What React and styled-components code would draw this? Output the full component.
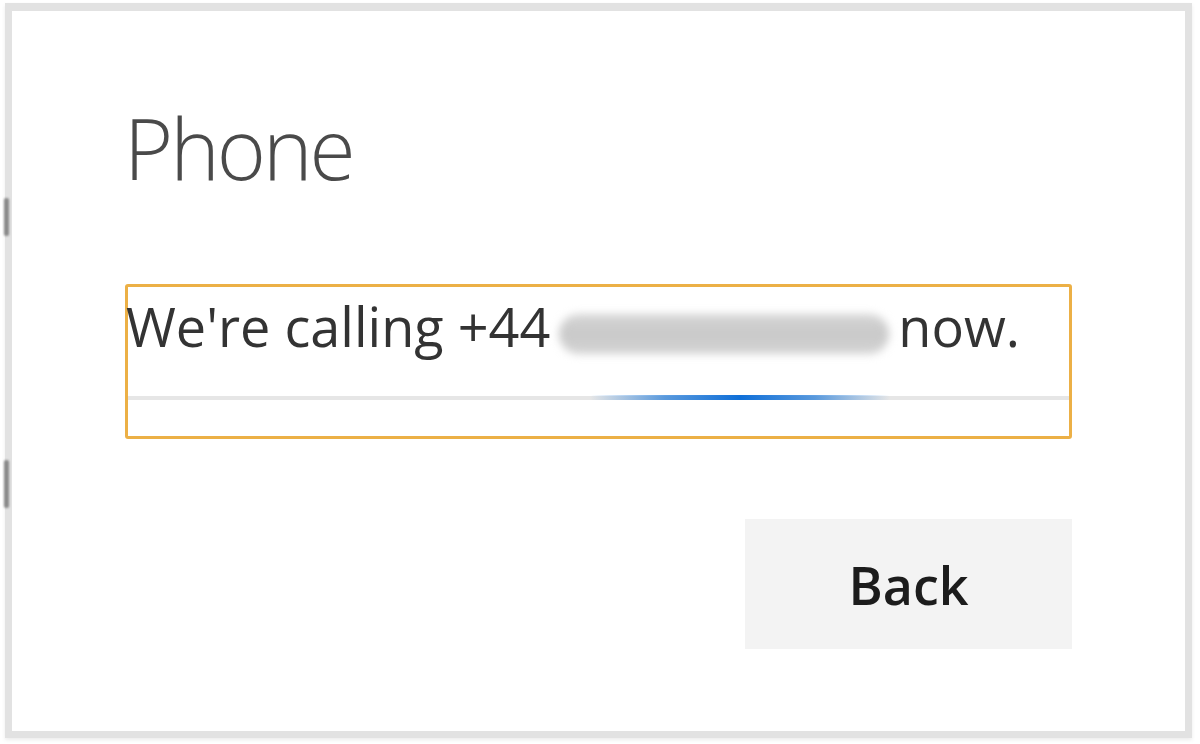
import React from "react";
import styled, { createGlobalStyle } from "styled-components";

const Global = createGlobalStyle`
  html, body { margin: 0; padding: 0; background: #ffffff; }
  body { font-family: "Open Sans", "Noto Sans", sans-serif; }
`;

const Page = styled.div`
  width: 1200px;
  height: 744px;
  box-sizing: border-box;
  padding: 3px 8px 6px 5px;
  position: relative;
  background: #ffffff;
`;

const Dialog = styled.div`
  box-sizing: border-box;
  height: 100%;
  border: 7px solid #e2e2e2;
  border-top-width: 8px;
  box-shadow: 0 2px 4px rgba(0, 0, 0, 0.08);
  background: #ffffff;
  display: flex;
  flex-direction: column;
  padding: 0 113px 0 113px;
`;

const Title = styled.h1`
  margin: 87px 0 0 -1px;
  font-family: "Open Sans", sans-serif;
  font-weight: 300;
  font-size: 84px;
  line-height: 100px;
  color: #4a4a4a;
  letter-spacing: -3px;
`;

const StatusBox = styled.div`
  margin-top: 86px;
  height: 155px;
  box-sizing: border-box;
  border: 3px solid #ecb046;
  border-radius: 3px;
  display: flex;
  flex-direction: column;
`;

const Message = styled.div`
  font-family: "Open Sans", sans-serif;
  font-size: 54px;
  line-height: 60px;
  color: #333333;
  margin: 9px 0 0 -2px;
  white-space: nowrap;
  display: flex;
  align-items: center;
`;

const Redacted = styled.span`
  display: inline-block;
  width: 330px;
  height: 40px;
  margin: 16px 9px 0 9px;
  border-radius: 20px;
  background: linear-gradient(180deg, #d6d6d6 0%, #c9c9c9 50%, #d4d4d4 100%);
  filter: blur(4px);
`;

const Track = styled.div`
  position: relative;
  margin-top: 40px;
  height: 4px;
  background: #e6e6e6;
`;

const Indicator = styled.div`
  position: absolute;
  top: -1px;
  height: 5px;
  border-radius: 3px;
  background: linear-gradient(
    90deg,
    rgba(30, 120, 215, 0) 0%,
    rgba(30, 120, 215, 0.7) 25%,
    #0f6fd8 50%,
    rgba(30, 120, 215, 0.7) 75%,
    rgba(30, 120, 215, 0) 100%
  );
`;

const Actions = styled.div`
  margin-top: 80px;
  display: flex;
  justify-content: flex-end;
`;

const Button = styled.button`
  width: 327px;
  height: 130px;
  border: none;
  background: #f3f3f3;
  font-family: "Open Sans", sans-serif;
  font-weight: 600;
  font-size: 52px;
  color: #1c1c1c;
  cursor: pointer;
  padding: 0;
`;

const EdgeMark = styled.span`
  position: absolute;
  left: 4px;
  width: 5px;
  border-radius: 2px;
  background: #8a8a8a;
  filter: blur(1px);
`;

export default function App() {
  return (
    <>
      <Global />
      <Page>
        <EdgeMark style={{ top: 198, height: 38 }} />
        <EdgeMark style={{ top: 460, height: 48 }} />
        <Dialog>
          <Title>Phone</Title>
          <StatusBox>
            <Message>
              We're calling +44
              <Redacted />
              now.
            </Message>
            <Track>
              <Indicator style={{ left: 462, width: 300 }} />
            </Track>
          </StatusBox>
          <Actions>
            <Button>Back</Button>
          </Actions>
        </Dialog>
      </Page>
    </>
  );
}
